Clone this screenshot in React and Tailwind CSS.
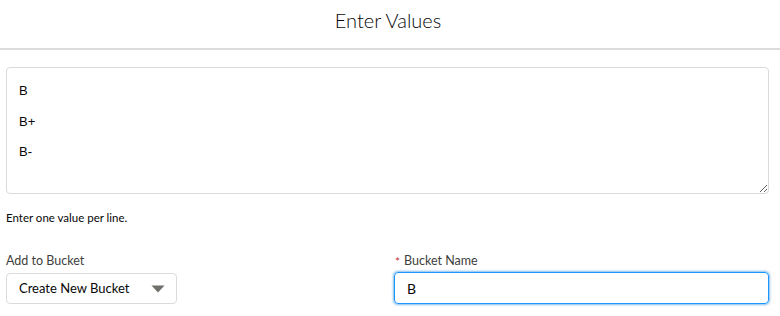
export default function App() {
  const sf = { fontFamily: 'Lato, "Open Sans", sans-serif' };
  return (
    <div className="w-[780px] h-[316px] bg-white overflow-hidden" style={sf}>
      <div className="h-[50px] border-b-2 border-[#dddbda] flex items-center justify-center">
        <h2 className="text-[20px] font-light text-[#080707] leading-none -mt-[8px] ml-[-4px]">Enter Values</h2>
      </div>
      <div className="pl-[6px] pr-[11px] pt-[17px]">
        <textarea
          className="block w-full h-[127px] border border-[#dddbda] rounded-[4px] pl-[12px] pt-[8px] text-[13px] leading-[30.5px] text-[#080707] outline-none"
          style={{ fontFamily: '"Liberation Sans", Arial, sans-serif' }}
          defaultValue={"B\nB+\nB-"}
        />
        <div className="mt-[15px] text-[11.5px] text-[#080707] leading-[18px]">Enter one value per line.</div>
        <div className="grid grid-cols-2 gap-[15px] mt-[25px]">
          <div>
            <div className="text-[12.5px] text-[#3e3e3c] leading-[18px] mb-[3px]">Add to Bucket</div>
            <div className="w-[171px] h-[31px] border border-[#dddbda] rounded-[4px] flex items-center justify-between pl-[12px] pr-[11px]">
              <span className="text-[13px] text-[#080707]">Create New Bucket</span>
              <svg width="14" height="8" viewBox="0 0 14 8"><path d="M0.5 0.5 H13.5 L7 7.5 Z" fill="#706e6b" /></svg>
            </div>
          </div>
          <div>
            <div className="text-[12.5px] text-[#3e3e3c] leading-[18px] mb-[2px] flex items-center">
              <span className="text-[#c23934] text-[12px] mr-[4px] leading-none mt-[1px]">*</span>Bucket Name
            </div>
            <div className="h-[32px] border border-[#1b96ff] rounded-[4px] shadow-[0_0_3px_#0176d3] flex items-center pl-[12px] -ml-[1px]">
              <span className="text-[14px] text-[#080707]">B</span>
            </div>
          </div>
        </div>
      </div>
    </div>
  );
}
